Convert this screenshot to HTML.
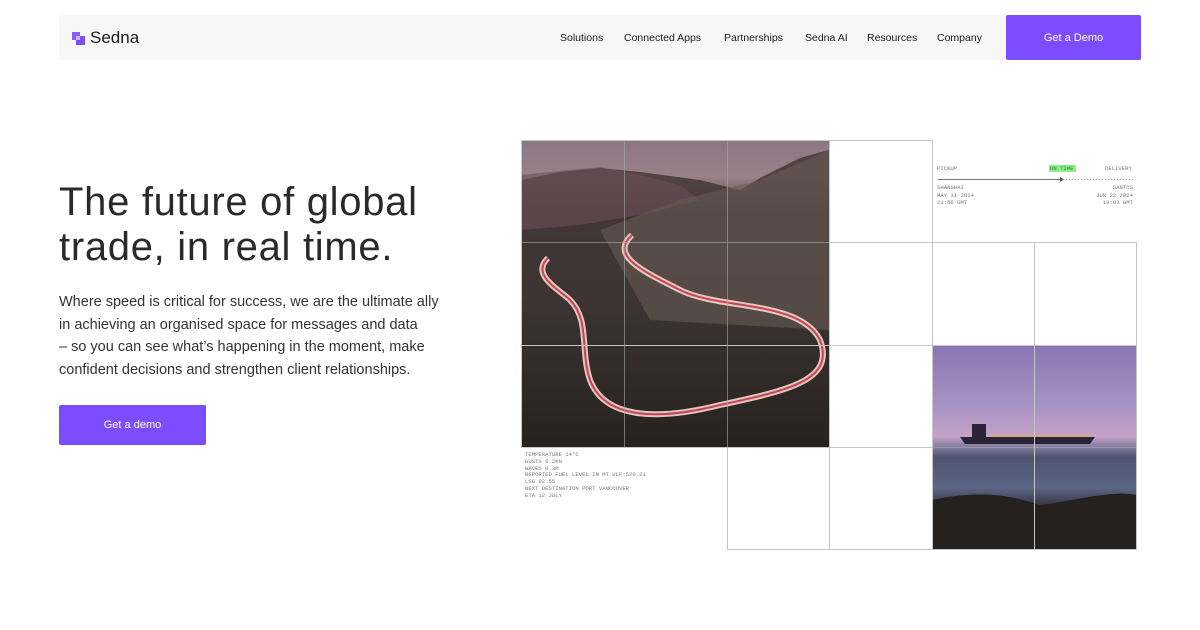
<!DOCTYPE html>
<html><head><meta charset="utf-8"><style>
*{margin:0;padding:0;box-sizing:border-box}
body{width:1200px;height:630px;background:#fff;font-family:"Liberation Sans",sans-serif;color:#2a2a2a;position:relative;overflow:hidden}
.nav{position:absolute;left:59px;top:15px;width:1082px;height:45px;background:#f7f7f7;border-radius:3px}
.logo{position:absolute;left:13px;top:13px;display:flex;align-items:center;font-size:17px;color:#1b1b1b}
.links{position:absolute;top:0;left:0;height:45px;font-size:10.5px;color:#1a1a1a}
.links span{position:absolute;top:17px;white-space:nowrap}
.demo{position:absolute;right:0;top:0;width:135px;height:45px;background:#7c4dff;color:#fff;font-size:11px;display:flex;align-items:center;justify-content:center;border-radius:2px}
h1{position:absolute;left:59px;top:180px;font-weight:400;font-size:40px;line-height:45px;color:#2a2a2a;letter-spacing:0.7px}
p.lead{position:absolute;left:59px;top:291px;width:386px;font-size:14.5px;line-height:22.5px;color:#333}
.btn{position:absolute;left:59px;top:405px;width:147px;height:40px;background:#7c4dff;color:#fff;font-size:11px;display:flex;align-items:center;justify-content:center;border-radius:2px}
.mono{font-family:"Liberation Mono",monospace;font-size:5.6px;color:#777;line-height:7.5px;position:absolute;white-space:pre}
</style></head><body>
<div class="nav">
 <div class="logo"><svg width="13" height="13" viewBox="0 0 13 13"><rect x="0" y="0" width="8" height="8" fill="#8b5cf6"/><rect x="4" y="4" width="9" height="9" fill="#7c4dff"/><rect x="4" y="4" width="4" height="4" fill="#c4b0ff"/></svg><span style="margin-left:5px">Sedna</span></div>
 <div class="links"><span style="left:501px">Solutions</span><span style="left:565px">Connected Apps</span><span style="left:665px">Partnerships</span><span style="left:746px">Sedna AI</span><span style="left:808px">Resources</span><span style="left:878px">Company</span></div>
 <div class="demo">Get a Demo</div>
</div>
<h1>The future of global<br>trade, in real time.</h1>
<p class="lead">Where speed is critical for success, we are the ultimate ally in achieving an organised space for messages and data<br>– so you can see what’s happening in the moment, make confident decisions and strengthen client relationships.</p>
<div class="btn">Get a demo</div>

<svg style="position:absolute;left:0;top:0" width="1200" height="630">
<defs>
<linearGradient id="sky" x1="0" y1="0" x2="0" y2="1"><stop offset="0" stop-color="#8a7784"/><stop offset="0.12" stop-color="#9a8088"/><stop offset="0.25" stop-color="#4a3e3e"/><stop offset="1" stop-color="#26221f"/></linearGradient>
<linearGradient id="sea" x1="0" y1="0" x2="0" y2="1"><stop offset="0" stop-color="#8a74b4"/><stop offset="0.3" stop-color="#a793c4"/><stop offset="0.45" stop-color="#c4a3c6"/><stop offset="0.49" stop-color="#8f82a8"/><stop offset="0.55" stop-color="#4d5470"/><stop offset="0.7" stop-color="#5b6585"/><stop offset="0.78" stop-color="#3a3b4a"/><stop offset="1" stop-color="#1c1c22"/></linearGradient>
</defs>
<rect x="521" y="140" width="308" height="307" fill="url(#sky)"/>
<path d="M521 180 L560 172 L600 168 L640 172 L700 180 L740 190 L760 178 L800 158 L829 150 L829 300 L521 300Z" fill="#3e3433" opacity="0.8"/>
<path d="M521 175 L570 170 L600 167 L640 175 L680 185 L700 200 L640 215 L580 225 L521 230Z" fill="#6e4f5a" opacity="0.6"/>
<path d="M600 230 L680 200 L760 180 L829 150 L829 330 L650 320Z" fill="#6a5d57" opacity="0.55"/>
<path d="M548 258 C530 275,560 290,570 300 C590 320,580 350,590 380 C605 420,660 420,720 405 C790 390,835 380,820 340 C800 300,720 310,680 290 C640 270,610 255,632 235" fill="none" stroke="#f4d8c4" stroke-width="6" opacity="0.9"/>
<path d="M548 258 C530 275,560 290,570 300 C590 320,580 350,590 380 C605 420,660 420,720 405 C790 390,835 380,820 340 C800 300,720 310,680 290 C640 270,610 255,632 235" fill="none" stroke="#c8405e" stroke-width="2"/>
<rect x="932" y="345" width="205" height="204" fill="url(#sea)"/>
<path d="M960 437 L1095 437 L1090 444 L965 444Z" fill="#2a2438"/><rect x="972" y="424" width="14" height="13" fill="#2a2438"/><path d="M990 436 L1090 436" stroke="#e8a84a" stroke-width="1.2"/>
<path d="M932 500 C980 490,1010 495,1040 505 C1080 500,1110 490,1137 495 L1137 549 L932 549Z" fill="#25211f"/>
<g stroke="#c6c6c6" stroke-width="1" fill="none">
<path d="M521 140.5H932M829.5 242.5H1137M521 345.5H1137M521 447.5H932M727 549.5H1137"/>
<path d="M521.5 140V447M829.5 140V549M932.5 140V549M1034.5 242V549M1136.5 242V549M727.5 447V549"/>
</g>
<g stroke="#aaa" stroke-width="1" opacity="0.6"><path d="M521 242.5H829M624.5 140V447M727.5 140V447M932 447.5H1137"/></g>
<line x1="938" y1="179.5" x2="1062" y2="179.5" stroke="#777"/><path d="M1060 177 L1064 179.5 L1060 182Z" fill="#555"/>
<line x1="1066" y1="179.5" x2="1133" y2="179.5" stroke="#999" stroke-dasharray="1 2"/>
<rect x="1049" y="165" width="27" height="7" fill="#8ef08a"/>
</svg>
<div class="mono" style="left:937px;top:165px">PICKUP</div>
<div class="mono" style="left:1050px;top:165px;color:#2a7a2a">ON TIME</div>
<div class="mono" style="left:1105px;top:165px">DELIVERY</div>
<div class="mono" style="left:937px;top:184px">SHANGHAI
MAY 31 2024
21:56 GMT</div>
<div class="mono" style="left:1085px;top:184px;text-align:right;width:48px">SANTOS
JUN 22 2024
19:03 GMT</div>
<div class="mono" style="left:525px;top:452px;line-height:6.8px">TEMPERATURE 14°C
GUSTS 6.2KN
WAVES 0.3M
REPORTED FUEL LEVEL IN MT ULF:520.21
LSG 92.55
NEXT DESTINATION PORT VANCOUVER
ETA 12 JULY</div>
</body></html>
